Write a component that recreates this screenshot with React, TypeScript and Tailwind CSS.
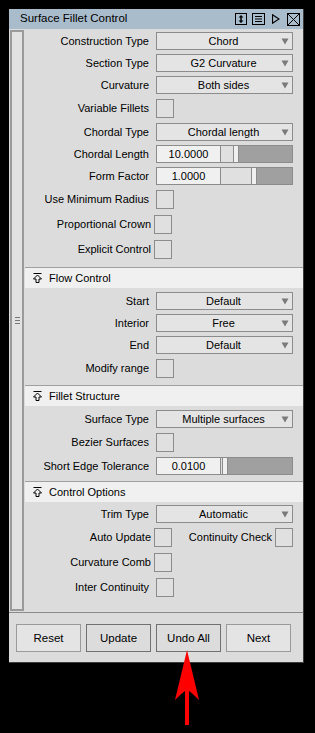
import type { ReactNode } from "react";

const FONT = "font-['Liberation_Sans',Arial,sans-serif]";

/** Small grey down-arrow used on every option menu. */
function MenuArrow() {
  return (
    <svg
      className="absolute right-[3px] top-[5px]"
      width="8"
      height="7"
      viewBox="0 0 8 7"
    >
      <path d="M0.5 0.5h7L4 6.5z" fill="#7a7a7a" />
    </svg>
  );
}

function Dropdown({ value }: { value: string }) {
  return (
    <div className="relative flex h-[18px] w-[137px] items-center justify-center border border-[#8c8c8c] bg-[#e4e4e4] pr-[2px] pt-[1px]">
      <span className="leading-none">{value}</span>
      <MenuArrow />
    </div>
  );
}

function Check() {
  return (
    <div className="h-[19px] w-[18px] shrink-0 border border-[#8c8c8c] bg-[#e0e0e0]" />
  );
}

function SliderField({ value, fill }: { value: string; fill: string }) {
  return (
    <div className="flex h-[18px]">
      <div className="flex w-[65px] items-center justify-center border border-[#8c8c8c] bg-[#f0f0f0] pt-[1px] leading-none">
        {value}
      </div>
      <div className="flex w-[72px] border border-l-0 border-[#8c8c8c]">
        <div className={`${fill} bg-[#e0e0e0]`} />
        <div className="w-[6px] border-x border-[#8c8c8c] bg-[#f0f0f0]" />
        <div className="flex-1 bg-[#a0a0a0]" />
      </div>
    </div>
  );
}

interface RowProps {
  label: string;
  tight?: boolean;
  check?: boolean;
  children: ReactNode;
}

function Row({ label, tight, check, children }: RowProps) {
  return (
    <div
      className={`flex items-center pr-[10px] ${check ? "h-[25px]" : "h-[22px]"}`}
    >
      <span
        className={`shrink-0 whitespace-nowrap text-right ${
          tight ? "w-[129px] pr-[3px]" : "w-[131px] pr-[7px]"
        }`}
      >
        {label}
      </span>
      {children}
    </div>
  );
}

/** Collapsible section title: hollow up-arrow with a bar, then the name. */
function SectionHeader({ title, className }: { title: string; className: string }) {
  return (
    <div
      className={`flex h-[21px] items-center gap-[7px] border-t border-[#a0a0a0] bg-[#f0f0f0] pl-[8px] ${className}`}
    >
      <svg width="9" height="10" viewBox="0 0 9 10">
        <path d="M0.5 0.5h8" stroke="#000" strokeWidth="1" />
        <path
          d="M4.5 2L8.5 6H6V9.5H3V6H0.5z"
          fill="none"
          stroke="#000"
          strokeWidth="1"
          strokeLinejoin="miter"
        />
      </svg>
      <span>{title}</span>
    </div>
  );
}

function TitleIcons() {
  return (
    <div className="ml-auto flex items-center">
      {/* resize */}
      <svg width="12" height="12" viewBox="0 0 12 12">
        <rect x="0.5" y="0.5" width="11" height="11" fill="none" stroke="#000" />
        <path d="M6 2L8.5 4.5h-5zM6 10L8.5 7.5h-5z" fill="#000" />
        <path d="M6 4v4" stroke="#000" strokeWidth="1.5" />
      </svg>
      {/* list */}
      <svg className="ml-[5px]" width="13" height="12" viewBox="0 0 13 12">
        <rect x="0.5" y="0.5" width="12" height="11" fill="none" stroke="#000" />
        <path d="M3 3.5h7M3 6h7M3 8.5h7" stroke="#000" strokeWidth="1" />
      </svg>
      {/* expand */}
      <svg className="ml-[7px]" width="8" height="10" viewBox="0 0 8 10">
        <path d="M0.5 0.8L7 5L0.5 9.2z" fill="none" stroke="#000" strokeWidth="1.2" />
      </svg>
      {/* close */}
      <svg className="ml-[7px]" width="13" height="13" viewBox="0 0 13 13">
        <rect x="0.5" y="0.5" width="12" height="12" fill="none" stroke="#000" />
        <path d="M1 1l11 11M12 1L1 12" stroke="#000" strokeWidth="1" />
      </svg>
    </div>
  );
}

function Btn({ label, dark }: { label: string; dark?: boolean }) {
  return (
    <button
      className={`flex h-[28px] w-[65px] items-center justify-center border pt-[1px] ${
        dark ? "border-[#707070] bg-[#dcdcdc]" : "border-[#9a9a9a] bg-[#e4e4e4]"
      }`}
    >
      {label}
    </button>
  );
}

export default function App() {
  return (
    <div
      className={`relative h-[733px] w-[315px] overflow-hidden bg-black pt-[9px] text-[11px] text-black ${FONT}`}
    >
      <div className="ml-[9px] w-[295px] border-r border-b border-[#3c3c3c] bg-[#dcdcdc]">
        {/* Title bar */}
        <div className="flex h-[20px] items-center bg-[#a9bccb] pl-[11px] pr-[3px] text-[11.5px]">
          <span>Surface Fillet Control</span>
          <TitleIcons />
        </div>

        {/* Body */}
        <div className="flex h-[583px]">
          {/* Left dock handle */}
          <div className="w-[16px] shrink-0 pl-[1px] pt-[1px]">
            <div className="flex h-[581px] w-[14px] items-center justify-center border-2 border-[#9a9a9a] bg-[#e2e2e2]">
              <div className="flex w-[5px] flex-col gap-[2px]">
                <div className="h-px bg-[#777]" />
                <div className="h-px bg-[#777]" />
                <div className="h-px bg-[#777]" />
              </div>
            </div>
          </div>

          {/* Options */}
          <div className="flex-1 pt-[1px]">
            <Row label="Construction Type">
              <Dropdown value="Chord" />
            </Row>
            <Row label="Section Type">
              <Dropdown value="G2 Curvature" />
            </Row>
            <Row label="Curvature">
              <Dropdown value="Both sides" />
            </Row>
            <Row label="Variable Fillets" check>
              <Check />
            </Row>
            <Row label="Chordal Type">
              <Dropdown value="Chordal length" />
            </Row>
            <Row label="Chordal Length">
              <SliderField value="10.0000" fill="w-[12px]" />
            </Row>
            <Row label="Form Factor">
              <SliderField value="1.0000" fill="w-[30px]" />
            </Row>
            <Row label="Use Minimum Radius" check>
              <Check />
            </Row>
            <Row label="Proportional Crown" check tight>
              <Check />
            </Row>
            <Row label="Explicit Control" check tight>
              <Check />
            </Row>

            <SectionHeader title="Flow Control" className="mt-[5px] mb-[2px]" />
            <Row label="Start">
              <Dropdown value="Default" />
            </Row>
            <Row label="Interior">
              <Dropdown value="Free" />
            </Row>
            <Row label="End">
              <Dropdown value="Default" />
            </Row>
            <Row label="Modify range" check>
              <Check />
            </Row>

            <SectionHeader title="Fillet Structure" className="mt-[4px] mb-[2px]" />
            <Row label="Surface Type">
              <Dropdown value="Multiple surfaces" />
            </Row>
            <Row label="Bezier Surfaces" check>
              <Check />
            </Row>
            <Row label="Short Edge Tolerance">
              <SliderField value="0.0100" fill="w-[1px]" />
            </Row>

            <SectionHeader title="Control Options" className="mt-[4px] mb-[1px]" />
            <Row label="Trim Type">
              <Dropdown value="Automatic" />
            </Row>
            <Row label="Auto Update" check tight>
              <Check />
              <span className="ml-auto pr-[3px]">Continuity Check</span>
              <Check />
            </Row>
            <Row label="Curvature Comb" check tight>
              <Check />
            </Row>
            <Row label="Inter Continuity" check>
              <Check />
            </Row>
          </div>
        </div>

        {/* Buttons */}
        <div className="flex gap-[5px] border-t border-[#8a8a8a] pt-[11px] pb-[10px] pl-[7px] text-[11.5px]">
          <Btn label="Reset" />
          <Btn label="Update" dark />
          <Btn label="Undo All" dark />
          <Btn label="Next" />
        </div>
      </div>

      {/* Red pointer arrow */}
      <svg
        className="absolute left-[170px] top-[645px]"
        width="34"
        height="84"
        viewBox="0 0 34 84"
      >
        <path d="M17 5L29 55Q22 48 19 46V80H15V46Q12 48 5 55z" fill="#ff0000" />
      </svg>
    </div>
  );
}
